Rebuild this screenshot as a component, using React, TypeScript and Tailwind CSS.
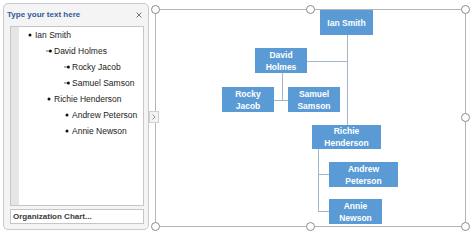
import React from "react";

type Item = { text: string; level: number; arrow?: boolean };

const items: Item[] = [
  { text: "Ian Smith", level: 0 },
  { text: "David Holmes", level: 1, arrow: true },
  { text: "Rocky Jacob", level: 2, arrow: true },
  { text: "Samuel Samson", level: 2, arrow: true },
  { text: "Richie Henderson", level: 1 },
  { text: "Andrew Peterson", level: 2 },
  { text: "Annie Newson", level: 2 },
];

const indent = ["pl-[8px]", "pl-[27px]", "pl-[45px]"];

function Bullet({ arrow }: { arrow?: boolean }) {
  return (
    <svg width="6" height="6" viewBox="0 0 6 6" className="shrink-0">
      {arrow && <line x1="0" y1="3" x2="3" y2="3" stroke="#444" strokeWidth="0.8" />}
      <circle cx={arrow ? 4.4 : 3} cy="3" r="1.5" fill="#111" />
    </svg>
  );
}

type Node = { lines: string[]; cls: string };

const nodes: Node[] = [
  { lines: ["Ian Smith"], cls: "left-[164px] top-[0px] w-[53px] h-[25px]" },
  { lines: ["David", "Holmes"], cls: "left-[99px] top-[38px] w-[52px] h-[25px]" },
  { lines: ["Rocky", "Jacob"], cls: "left-[66px] top-[77px] w-[52px] h-[25px]" },
  { lines: ["Samuel", "Samson"], cls: "left-[132px] top-[77px] w-[52px] h-[25px]" },
  { lines: ["Richie", "Henderson"], cls: "left-[156px] top-[115px] w-[69px] h-[24px]" },
  { lines: ["Andrew", "Peterson"], cls: "left-[173px] top-[152px] w-[69px] h-[25px]" },
  { lines: ["Annie", "Newson"], cls: "left-[173px] top-[189px] w-[53px] h-[25px]" },
];

const connectors = [
  "left-[191px] top-[25px] w-px h-[90px]",
  "left-[151px] top-[51px] w-[40px] h-px",
  "left-[126px] top-[63px] w-px h-[27px]",
  "left-[118px] top-[90px] w-[14px] h-px",
  "left-[162px] top-[139px] w-px h-[62px]",
  "left-[162px] top-[164px] w-[11px] h-px",
  "left-[162px] top-[201px] w-[11px] h-px",
];

const handles = [
  "-left-[5px] -top-[5px]",
  "left-[150px] -top-[5px]",
  "-right-[5px] -top-[5px]",
  "-right-[5px] top-[103px]",
  "-right-[5px] -bottom-[5px]",
  "left-[150px] -bottom-[5px]",
  "-left-[5px] -bottom-[5px]",
];

export default function App() {
  return (
    <div className="flex w-[474px] h-[234px] bg-white overflow-hidden font-['Liberation_Sans',Arial,sans-serif]">
      {/* Text pane */}
      <div className="ml-[3px] mt-[3px] w-[146px] h-[227px] shrink-0 rounded-[5px] border border-[#c9c9c9] bg-[#f4f4f4] flex flex-col">
        <div className="h-[22px] flex items-center justify-between pl-[3px] pr-[6px]">
          <span className="text-[8px] font-bold text-[#2f5b97]">Type your text here</span>
          <svg width="6" height="6" viewBox="0 0 6 6">
            <path d="M0.5 0.5 L5.5 5.5 M5.5 0.5 L0.5 5.5" stroke="#666" strokeWidth="0.9" />
          </svg>
        </div>
        <div className="ml-[6px] w-[134px] h-[180px] border border-[#c6c6c6] bg-white flex">
          <div className="w-[8px] bg-[#e6e6e6] shrink-0" />
          <ul className="flex-1">
            {items.map((it) => (
              <li
                key={it.text}
                className={`flex items-center gap-[2px] h-[16px] text-[8.5px] text-[#222] ${indent[it.level]}`}
              >
                <Bullet arrow={it.arrow} />
                <span>{it.text}</span>
              </li>
            ))}
          </ul>
        </div>
        <div className="ml-[6px] mt-[3px] w-[134px] h-[15px] border border-[#c6c6c6] bg-white flex items-center pl-[2px]">
          <span className="text-[8px] font-bold text-[#3a3a3a]">Organization Chart...</span>
        </div>
      </div>

      {/* Diagram canvas */}
      <div className="ml-[6px] mt-[9px] w-[311px] h-[218px] border border-[#b5b5b5] relative">
        {connectors.map((c) => (
          <div key={c} className={`absolute bg-[#a3b4cc] ${c}`} />
        ))}
        {nodes.map((n) => (
          <div
            key={n.lines.join()}
            className={`absolute bg-[#5b9bd5] flex flex-col items-center justify-center text-white font-bold text-[8.5px] leading-[12px] ${n.cls}`}
          >
            {n.lines.map((l) => (
              <span key={l}>{l}</span>
            ))}
          </div>
        ))}
        {handles.map((h) => (
          <div
            key={h}
            className={`absolute w-[9px] h-[9px] rounded-full border border-[#8c8c8c] bg-white ${h}`}
          />
        ))}
        <div className="absolute -left-[7px] top-[101px] w-[10px] h-[12px] bg-[#f4f4f4] border border-[#d0d0d0] flex items-center justify-center">
          <svg width="4" height="6" viewBox="0 0 4 6">
            <path d="M0.5 0.5 L3 3 L0.5 5.5" stroke="#777" strokeWidth="0.8" fill="none" />
          </svg>
        </div>
      </div>
    </div>
  );
}
